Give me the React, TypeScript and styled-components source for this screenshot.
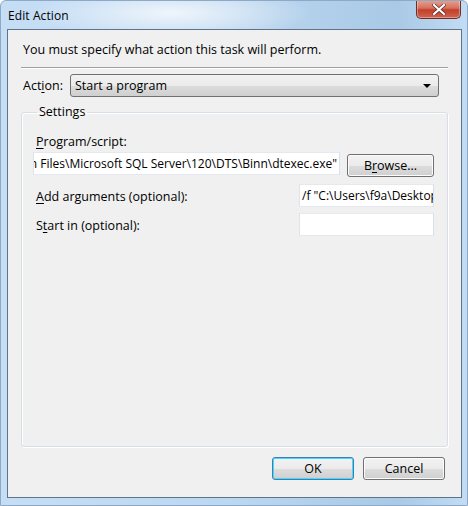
import React from "react";
import styled, { createGlobalStyle } from "styled-components";

const Global = createGlobalStyle`
  html, body { margin: 0; padding: 0; background: #ffffff; }
  body {
    font-family: "Open Sans", "Noto Sans", sans-serif;
    font-size: 12.5px;
    letter-spacing: 0;
    line-height: 16px;
    color: #000;
  }
  * { box-sizing: border-box; }
`;

const Window = styled.div`
  width: 468px;
  height: 506px;
  display: flex;
  flex-direction: column;
  background:
    radial-gradient(ellipse 200px 40px at 170px 12px, rgba(255,255,255,0.75), rgba(255,255,255,0) 70%),
    linear-gradient(90deg, #c6def5 0%, #bcd7f0 50%, #a9c9e6 85%, #c2dcf3 100%);
  border: 1px solid #8ea9c6;
  border-radius: 6px 6px 0 0;
  overflow: hidden;
`;

const TitleBar = styled.div`
  height: 28px;
  display: flex;
  align-items: flex-start;
  justify-content: space-between;
  padding: 0 6px 0 7px;
`;

const Title = styled.div`
  font-size: 12px;
  letter-spacing: 0.1px;
  line-height: 30px;
  color: #000;
`;

const CloseButton = styled.div`
  width: 45px;
  height: 19px;
  margin-top: -1px;
  display: flex;
  align-items: center;
  justify-content: center;
  border: 1px solid #6b2e2b;
  border-top: none;
  border-radius: 0 0 5px 5px;
  background: linear-gradient(180deg, #e8a493 0%, #d6705c 45%, #c0402b 55%, #d2644f 100%);
  box-shadow: inset 0 0 0 1px rgba(255,255,255,0.35);
`;

const Client = styled.div`
  flex: 1;
  margin: 0 5px 7px 6px;
  border: 1px solid #5f738a;
  background: #f0f0f0;
  display: flex;
  flex-direction: column;
  padding: 0 13px 0 13px;
`;

const Intro = styled.div`
  padding: 12px 0 0 2px;
  height: 37px;
`;

const Separator = styled.div`
  height: 2px;
  border-top: 1px solid #a0a0a0;
  border-bottom: 1px solid #ffffff;
`;

const ActionRow = styled.div`
  display: flex;
  align-items: center;
  gap: 7px;
  margin-top: 5px;
  padding-left: 2px;
  padding-right: 9px;
`;

const Label = styled.span`
  white-space: nowrap;
  padding-top: 1px;
`;

const Key = styled.span`
  text-decoration: underline;
  text-underline-offset: 2px;
`;

const Combo = styled.div`
  flex: 1;
  height: 23px;
  display: flex;
  align-items: center;
  justify-content: space-between;
  padding: 1px 7px 0 4px;
  border: 1px solid #707070;
  border-radius: 3px;
  background: linear-gradient(180deg, #f2f2f2 0%, #ebebeb 50%, #dddddd 51%, #cfcfcf 100%);
`;

const Arrow = styled.div`
  width: 0;
  height: 0;
  border-left: 4px solid transparent;
  border-right: 4px solid transparent;
  border-top: 4px solid #000;
`;

const Group = styled.fieldset`
  margin: 7px 0 0 0;
  padding: 14px 13px 0 11px;
  border: 1px solid #d5dfe5;
  border-radius: 3px;
  height: 343px;
  box-shadow: inset 1px 1px 0 #ffffff, 1px 1px 0 #ffffff;
  display: flex;
  flex-direction: column;
`;

const Legend = styled.legend`
  padding: 0 2px;
  margin-left: 4px;
`;

const FieldLabel = styled.div`
  padding-left: 3px;
`;

const ProgramRow = styled.div`
  display: flex;
  align-items: flex-start;
  gap: 7px;
  margin-top: 2px;
`;

const TextBox = styled.div<{ $w?: number; $align?: "start" | "end" }>`
  ${(p) => (p.$w ? `width: ${p.$w}px;` : "flex: 1;")}
  height: 23px;
  border: 1px solid #abadb3;
  border-top-color: #e3e9ef;
  border-left-color: #e2e3ea;
  border-right-color: #dbdfe6;
  border-bottom-color: #e3e9ef;
  background: #ffffff;
  display: flex;
  align-items: center;
  justify-content: ${(p) => (p.$align === "end" ? "flex-end" : "flex-start")};
  padding: 1px 2px 0;
  overflow: hidden;
  white-space: nowrap;
  font-size: 12px;
`;

const Button = styled.div<{ $default?: boolean }>`
  width: 87px;
  height: 23px;
  display: flex;
  align-items: center;
  justify-content: center;
  padding-top: 1px;
  border: 1px solid ${(p) => (p.$default ? "#3c7fb1" : "#707070")};
  border-radius: 3px;
  background: linear-gradient(180deg, #f2f2f2 0%, #ebebeb 50%, #dddddd 51%, #cfcfcf 100%);
  box-shadow: inset 0 0 0 1px ${(p) => (p.$default ? "#48d7fd" : "#fcfcfc")};
`;

const BrowseButton = styled(Button)`
  margin-top: 2px;
`;

const ArgRow = styled.div<{ $gap: number }>`
  display: flex;
  align-items: center;
  justify-content: space-between;
  margin-top: ${(p) => p.$gap}px;
`;

const ArgLabel = styled(FieldLabel)`
  padding-top: 2px;
`;

const Footer = styled.div`
  display: flex;
  justify-content: flex-end;
  gap: 9px;
  margin-top: 10px;
  padding-right: 3px;
`;

const FooterButton = styled(Button)`
  width: 82px;
`;

const CloseIcon = () => (
  <svg width="14" height="11" viewBox="0 0 14 11">
    <path d="M2 1 L12 10 M12 1 L2 10" stroke="#5b2a26" strokeWidth="3.6" strokeLinecap="square" />
    <path d="M2 1 L12 10 M12 1 L2 10" stroke="#ffffff" strokeWidth="2.2" strokeLinecap="square" />
  </svg>
);

export default function App() {
  return (
    <>
      <Global />
      <Window>
        <TitleBar>
          <Title>Edit Action</Title>
          <CloseButton>
            <CloseIcon />
          </CloseButton>
        </TitleBar>
        <Client>
          <Intro>You must specify what action this task will perform.</Intro>
          <Separator />
          <ActionRow>
            <Label>
              Act<Key>i</Key>on:
            </Label>
            <Combo>
              <span>Start a program</span>
              <Arrow />
            </Combo>
          </ActionRow>
          <Group>
            <Legend>Settings</Legend>
            <FieldLabel>
              <Key>P</Key>rogram/script:
            </FieldLabel>
            <ProgramRow>
              <TextBox $w={307} $align="end">
                "C:\Program Files\Microsoft SQL Server\120\DTS\Binn\dtexec.exe"
              </TextBox>
              <BrowseButton>
                B<Key>r</Key>owse...
              </BrowseButton>
            </ProgramRow>
            <ArgRow $gap={7}>
              <ArgLabel>
                <Key>A</Key>dd arguments (optional):
              </ArgLabel>
              <TextBox $w={135}>/f "C:\Users\f9a\Desktop\Package.dtsx"</TextBox>
            </ArgRow>
            <ArgRow $gap={6}>
              <ArgLabel>
                S<Key>t</Key>art in (optional):
              </ArgLabel>
              <TextBox $w={135} />
            </ArgRow>
          </Group>
          <Footer>
            <FooterButton $default>OK</FooterButton>
            <FooterButton>Cancel</FooterButton>
          </Footer>
        </Client>
      </Window>
    </>
  );
}
